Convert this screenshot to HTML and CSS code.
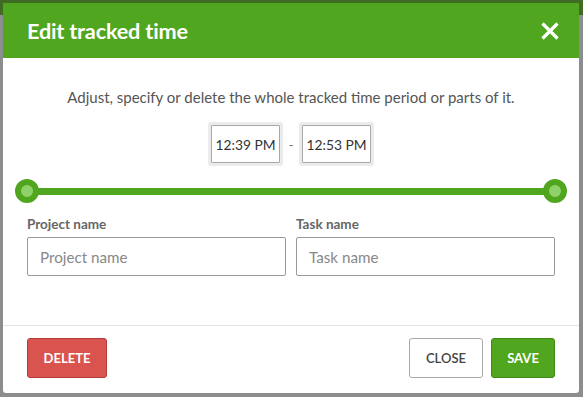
FILE: index.html
```html
<!DOCTYPE html>
<html>
<head>
<meta charset="utf-8">
<link rel="stylesheet" href="styles.css">
</head>
<body>
<div class="modal">
  <div class="modal-header">
    <h1 class="title">Edit tracked time</h1>
    <button class="close-x" aria-label="Close">
      <svg width="20" height="20" viewBox="0 0 20 20"><path d="M2.5 2.5 L17.5 17.5 M17.5 2.5 L2.5 17.5" stroke="#fff" stroke-width="3.2" stroke-linecap="butt"/></svg>
    </button>
  </div>
  <div class="modal-body">
    <p class="desc">Adjust, specify or delete the whole tracked time period or parts of it.</p>
    <div class="times">
      <div class="time-wrap"><div class="time">12:39 PM</div></div>
      <span class="dash">-</span>
      <div class="time-wrap"><div class="time">12:53 PM</div></div>
    </div>
    <div class="slider">
      <span class="handle"></span>
      <span class="track"></span>
      <span class="handle"></span>
    </div>
    <div class="fields">
      <div class="field">
        <label class="label">Project name</label>
        <div class="input">Project name</div>
      </div>
      <div class="field">
        <label class="label">Task name</label>
        <div class="input">Task name</div>
      </div>
    </div>
  </div>
  <div class="modal-footer">
    <button class="btn btn-delete">DELETE</button>
    <div class="right">
      <button class="btn btn-close">CLOSE</button>
      <button class="btn btn-save">SAVE</button>
    </div>
  </div>
</div>
</body>
</html>
```
FILE: styles.css
```css
html, body { margin: 0; height: 100%; }
body {
  background: linear-gradient(#3f6b25 0, #3f6b25 15px, #8b8d8f 15px);
  padding: 3px 4px 0 3px;
  box-sizing: border-box;
  font-family: "Lato", "Liberation Sans", sans-serif;
}
.modal {
  width: 576px;
  height: 390px;
  background: #fff;
  border-radius: 0 0 3px 3px;
  display: flex;
  flex-direction: column;
  overflow: hidden;
}
.modal-header {
  height: 55px;
  background: #50a61e;
  display: flex;
  align-items: center;
  justify-content: space-between;
  padding: 0 19px 0 24px;
  flex: none;
}
.title {
  margin: 0;
  color: #fff;
  font-size: 21.7px;
  font-weight: 700;
  letter-spacing: -0.2px;
}
.close-x {
  background: none;
  border: 0;
  padding: 0;
  width: 20px;
  height: 20px;
  display: flex;
}
.modal-body {
  flex: 1;
  padding: 0 24px;
}
.desc {
  margin: 29px 0 0;
  text-align: center;
  color: #555;
  font-size: 15px;
  line-height: 20px;
}
.times {
  display: flex;
  justify-content: center;
  align-items: center;
  gap: 5px;
  margin-top: 15px;
}
.time-wrap {
  background: #ebebeb;
  padding: 3px;
  border-radius: 3px;
}
.time {
  border: 1px solid #a8a8a8;
  background: #fff;
  height: 38px;
  width: 69px;
  box-sizing: border-box;
  display: flex;
  align-items: center;
  justify-content: center;
  font-size: 13.8px;
  color: #333;
  border-radius: 1px;
}
.dash { color: #777; font-size: 14px; width: 6px; text-align: center; }
.slider {
  display: flex;
  align-items: center;
  margin: 13px -12px 0;
  height: 24px;
}
.handle {
  width: 12px;
  height: 12px;
  border-radius: 50%;
  background: #8fd16a;
  border: 6px solid #50a61e;
  flex: none;
}
.track {
  flex: 1;
  height: 7px;
  background: #50a61e;
  margin: 0 -2px;
}
.fields {
  display: flex;
  gap: 10px;
  margin-top: 13px;
}
.field { flex: 1; display: flex; flex-direction: column; }
.label {
  font-size: 13.5px;
  font-weight: 700;
  color: #666;
  line-height: 16px;
  margin-bottom: 5px;
}
.input {
  height: 39px;
  box-sizing: border-box;
  border: 1px solid #999;
  border-radius: 2px;
  display: flex;
  align-items: center;
  padding: 0 12px;
  color: #888;
  font-size: 15.2px;
}
.modal-footer {
  flex: none;
  border-top: 1px solid #e5e5e5;
  height: 68px;
  padding: 12px 24px 0;
  box-sizing: border-box;
  display: flex;
  justify-content: space-between;
  align-items: flex-start;
}
.right { display: flex; gap: 8px; }
.btn {
  height: 40px;
  border-radius: 3px;
  font-family: inherit;
  font-size: 13px;
  font-weight: 700;
  padding: 0 14px;
  cursor: pointer;
}
.btn-delete { background: #d9534f; border: 1px solid #b33c38; color: #fff; width: 80px; }
.btn-close { background: #fff; border: 1px solid #a8a8a8; color: #444; width: 74px; font-weight: 600; }
.btn-save { background: #50a61e; border: 1px solid #3e8a16; color: #fff; width: 64px; }
```
